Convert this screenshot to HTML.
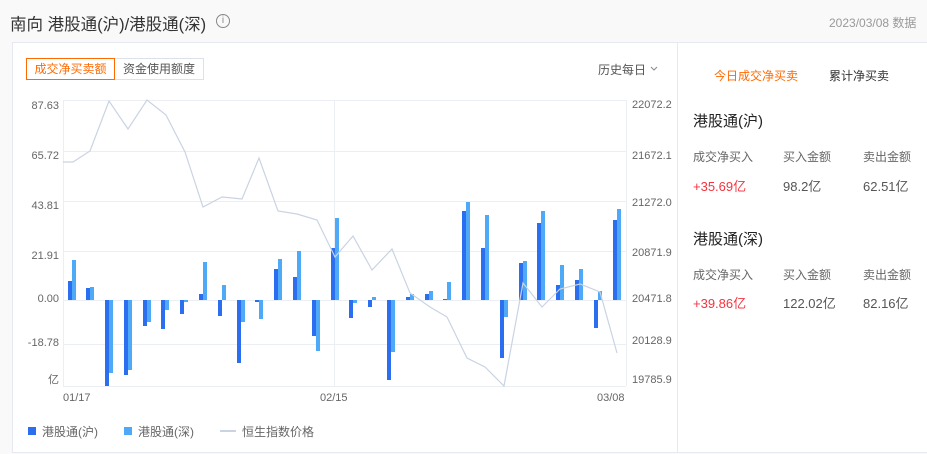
<!DOCTYPE html>
<html><head><meta charset="utf-8">
<style>
*{margin:0;padding:0;box-sizing:border-box}
body{width:927px;height:454px;overflow:hidden;background:#f9f9f9;font-family:"Liberation Sans","Noto Sans CJK SC",sans-serif;position:relative;color:#333}
.a{position:absolute;white-space:nowrap}
</style></head><body>
<div class="a" style="left:10px;top:11px;font-size:16.5px;color:#333">南向 港股通(沪)/港股通(深)</div>
<div class="a" style="left:216px;top:14px;width:14px;height:14px;border:1.3px solid #888;border-radius:50%;font-size:10px;line-height:11px;text-align:center;color:#888">i</div>
<div class="a" style="left:829px;top:14px;font-size:12px;color:#999">2023/03/08 数据</div>

<div class="a" style="left:12px;top:42px;width:930px;height:411px;background:#fff;border:1px solid #e6e9ef"></div>
<div class="a" style="left:677px;top:43px;width:1px;height:410px;background:#e6e9ef"></div>

<div class="a" style="left:26px;top:58px;width:89px;height:22px;border:1px solid #ff6a00;font-size:12px;color:#ff6a00;line-height:20px;text-align:center">成交净买卖额</div>
<div class="a" style="left:115px;top:58px;width:89px;height:22px;border:1px solid #dde2ea;border-left:none;font-size:12px;color:#555;line-height:20px;text-align:center">资金使用额度</div>
<div class="a" style="left:598px;top:61px;font-size:12px;color:#555">历史每日</div>
<svg class="a" style="left:650px;top:66px" width="8" height="6"><polyline points="1,1 4,4 7,1" fill="none" stroke="#889" stroke-width="1"/></svg>

<div class="a" style="left:714px;top:67px;font-size:12px;color:#ff6a00">今日成交净买卖</div>
<div class="a" style="left:829px;top:67px;font-size:12px;color:#333">累计净买卖</div>

<div class="a" style="left:693px;top:110px;font-size:15px;color:#222">港股通(沪)</div>
<div class="a" style="left:693px;top:148px;font-size:12px;color:#666">成交净买入</div>
<div class="a" style="left:783px;top:148px;font-size:12px;color:#666">买入金额</div>
<div class="a" style="left:863px;top:148px;font-size:12px;color:#666">卖出金额</div>
<div class="a" style="left:693px;top:176px;font-size:13px;color:#f5333f">+35.69亿</div>
<div class="a" style="left:783px;top:176px;font-size:13px;color:#555">98.2亿</div>
<div class="a" style="left:863px;top:176px;font-size:13px;color:#555">62.51亿</div>

<div class="a" style="left:693px;top:228px;font-size:15px;color:#222">港股通(深)</div>
<div class="a" style="left:693px;top:266px;font-size:12px;color:#666">成交净买入</div>
<div class="a" style="left:783px;top:266px;font-size:12px;color:#666">买入金额</div>
<div class="a" style="left:863px;top:266px;font-size:12px;color:#666">卖出金额</div>
<div class="a" style="left:693px;top:293px;font-size:13px;color:#f5333f">+39.86亿</div>
<div class="a" style="left:783px;top:293px;font-size:13px;color:#555">122.02亿</div>
<div class="a" style="left:863px;top:293px;font-size:13px;color:#555">82.16亿</div>

<svg class="a" style="left:0;top:0" width="927" height="454" font-family="Liberation Sans, Noto Sans CJK SC, sans-serif" font-size="11" fill="#666">
<g stroke="#ebeef3" stroke-width="1">
<line x1="63" y1="100.5" x2="626" y2="100.5"/><line x1="63" y1="151.5" x2="626" y2="151.5"/>
<line x1="63" y1="201.5" x2="626" y2="201.5"/><line x1="63" y1="251.5" x2="626" y2="251.5"/>
<line x1="63" y1="300.5" x2="626" y2="300.5"/><line x1="63" y1="344.5" x2="626" y2="344.5"/>
<line x1="63" y1="386.5" x2="626" y2="386.5"/>
<line x1="63.5" y1="100" x2="63.5" y2="386"/><line x1="334.5" y1="100" x2="334.5" y2="386"/>
<line x1="626.5" y1="100" x2="626.5" y2="386"/>
</g>
<g text-anchor="end">
<text x="59" y="109">87.63</text><text x="59" y="159">65.72</text><text x="59" y="209">43.81</text>
<text x="59" y="259">21.91</text><text x="59" y="302">0.00</text><text x="59" y="346">-18.78</text><text x="59" y="383">亿</text>
</g>
<text x="632" y="108">22072.2</text><text x="632" y="159">21672.1</text><text x="632" y="206">21272.0</text>
<text x="632" y="256">20871.9</text><text x="632" y="302">20471.8</text><text x="632" y="344">20128.9</text><text x="632" y="383">19785.9</text>
<text x="63" y="401">01/17</text><text x="320" y="401">02/15</text><text x="597" y="401">03/08</text>
<g id="bars"></g>
<polyline fill="none" stroke="#c9d3e3" stroke-width="1.2" points="63,162 73,162 90,151 109,101 128,129 147,100 166,115 185,152 203,207 222,197 242,199 259,158 278,211 297,214 317,220 335,257 353,236 372,270 392,249 410,293 430,307 447,317 467,358 485,367 504,386 523,283 542,307 560,289 580,284 600,292 617,353"/>
<rect x="28" y="427" width="8" height="8" fill="#2b6ff0"/>
<text x="42" y="436" font-size="12">港股通(沪)</text>
<rect x="124" y="427" width="8" height="8" fill="#4eaaf7"/>
<text x="138" y="436" font-size="12">港股通(深)</text>
<rect x="220" y="430" width="16" height="2" fill="#c9d3e3"/>
<text x="242" y="436" font-size="12">恒生指数价格</text>
</svg>
<script>
var d=[[68,281,260],[86,288,287],[105,386,373],[124,375,370],[143,326,322],[161,329,310],[180,314,302],[199,294,262],[218,316,285],[237,363,322],[255,302,319],[274,269,259],[293,277,251],[312,336,351],[331,248,218],[349,318,303],[368,307,297],[387,380,352],[406,297,294],[425,294,291],[443,299,282],[462,211,202],[481,248,215],[500,358,317],[519,263,261],[537,223,211],[556,285,265],[575,280,269],[594,328,291],[613,220,209]];
var z=300,s='';
d.forEach(function(g){
 var a=g[1],b=g[2];
 s+='<rect x="'+g[0]+'" y="'+Math.min(a,z)+'" width="4" height="'+Math.max(1,Math.abs(a-z))+'" fill="#2b6ff0"/>';
 s+='<rect x="'+(g[0]+4)+'" y="'+Math.min(b,z)+'" width="4" height="'+Math.max(1,Math.abs(b-z))+'" fill="#4eaaf7"/>';
});
document.getElementById('bars').innerHTML=s;
</script>
</body></html>
